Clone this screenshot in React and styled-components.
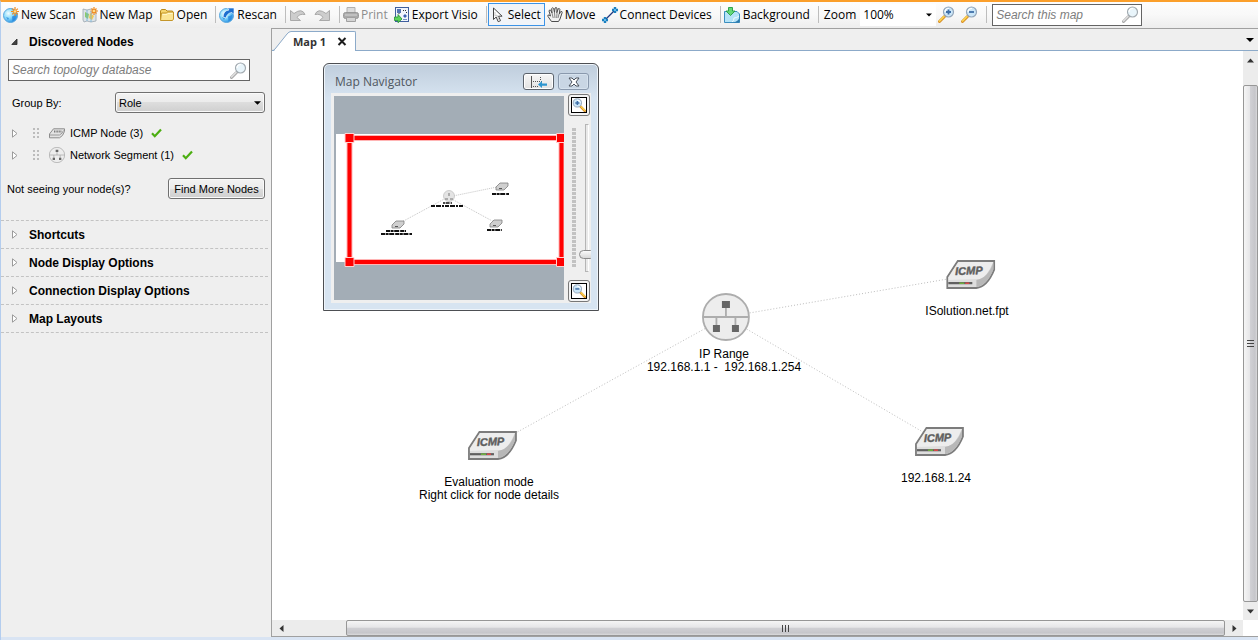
import React from 'react';
import styled, { createGlobalStyle, css } from 'styled-components';

const GlobalStyle = createGlobalStyle`
    *, *::before, *::after { box-sizing: border-box; }

    body {
        margin: 0;
        background: #efefef;
        color: #000;
        font-family: "Liberation Sans", Arial, sans-serif;
        font-size: 11px;
    }

    button, input, select { font: inherit; color: inherit; }
    svg { display: block; flex: none; }
`;

const segoe = css`
    font-family: "Open Sans", "Noto Sans", sans-serif;
    font-size: 12px;
`;

const Page = styled.div`
    min-height: 100vh;
    display: flex;
    flex-direction: column;
    border-top: 2px solid #fb9f2b;
    border-left: 1px solid #b4cdee;
`;

/* ---------- toolbar ---------- */

const Toolbar = styled.header`
    ${segoe}
    height: 26px;
    padding-bottom: 1px;
    display: flex;
    align-items: center;
    white-space: nowrap;
    background: linear-gradient(#fdfdfd, #f8f8f8 50%, #ededed);
`;

const ToolButton = styled.button`
    height: 23px;
    padding: 0 3px 0 1px;
    display: flex;
    align-items: center;
    gap: 2px;
    border: 1px solid ${p => (p.$active ? '#3c93e6' : 'transparent')};
    background: ${p => (p.$active ? '#f1f4f8' : 'none')};

    &:disabled { color: #8d8d8d; }
`;

const Separator = styled.span`
    width: 1px;
    height: 17px;
    margin: 0 1px 0 4px;
    background: #bdbdbd;
`;

const ZoomLabel = styled.label`
    padding: 0 4px;
`;

const SelectWrap = styled.div`
    position: relative;
    width: ${p => p.$width};

    svg {
        position: absolute;
        right: 4px;
        top: 50%;
        margin-top: -2px;
        pointer-events: none;
    }
`;

const ZoomSelect = styled.select`
    appearance: none;
    width: 100%;
    height: 22px;
    padding: 0 3px;
    border: none;
    background: #fff;
`;

const SearchBox = styled.div`
    height: 22px;
    width: ${p => p.$width};
    margin: ${p => p.$margin};
    padding: 0 2px 0 3px;
    display: flex;
    align-items: center;
    border: 1px solid #646464;
    background: #fff;

    input {
        flex: 1;
        min-width: 0;
        padding: 0;
        border: none;
        outline: none;
        background: none;
        font-family: "Liberation Sans", Arial, sans-serif;
        font-size: 12px;
        font-style: italic;
    }

    input::placeholder { color: #7d7d7d; opacity: 1; }
`;

/* ---------- sidebar ---------- */

const Body = styled.div`
    flex: 1;
    display: flex;
    border-bottom: 3px solid #d9e4f3;
`;

const Sidebar = styled.aside`
    flex: none;
    width: 270px;
    padding-right: 3px;
`;

const SectionTitle = styled.button`
    width: 100%;
    height: 27px;
    padding: 0 0 0 10px;
    display: flex;
    align-items: center;
    gap: 10px;
    border: none;
    background: none;
    font-size: 12px;
    font-weight: bold;
    text-align: left;
`;

const Section = styled.section`
    border-top: 1px dashed #c3c3c3;

    &:last-child { border-bottom: 1px dashed #c3c3c3; }
`;

const FieldRow = styled.div`
    padding: ${p => p.$padding};
    display: flex;
    align-items: center;
    justify-content: space-between;
`;

const raised = css`
    height: 21px;
    border: 1px solid #707070;
    border-radius: 3px;
    background: linear-gradient(#f3f3f3, #ebebeb 50%, #dddddd 50%, #cfcfcf);
    box-shadow: inset 0 0 0 1px #fafafa;
`;

const RoleSelect = styled.select`
    ${raised}
    appearance: none;
    width: 100%;
    padding: 0 3px;
`;

const FindButton = styled.button`
    ${raised}
    width: 97px;
    padding: 0;
`;

const Tree = styled.ul`
    margin: 0;
    padding: 9px 0 0 10px;
    list-style: none;
`;

const TreeItem = styled.li`
    height: 22px;
    display: flex;
    align-items: center;

    .grip { margin: 0 9px 0 13px; }
    .kind { margin-right: 5px; }
    .check { margin-left: 8px; }
`;

/* ---------- map area ---------- */

const Workspace = styled.main`
    flex: 1;
    min-width: 0;
    display: flex;
    flex-direction: column;
    border: 1px solid #a0a0a0;
    border-right: none;
`;

const TabStrip = styled.div`
    height: 22px;
    display: flex;
    align-items: flex-end;
    justify-content: space-between;
    border-bottom: 1px solid #8caac9;
`;

const Tab = styled.div`
    ${segoe}
    font-size: 11px;
    font-weight: bold;
    height: 20px;
    margin-bottom: -1px;
    display: flex;
    color: #333;
`;

const TabBody = styled.div`
    width: 65px;
    padding: 0 8px 0 2px;
    display: flex;
    align-items: center;
    justify-content: space-between;
    border: 1px solid #8caac9;
    border-width: 1px 1px 0 0;
    border-radius: 0 2px 0 0;
    background: #fff;
`;

const PlainButton = styled.button`
    padding: 0;
    border: none;
    background: none;
`;

const TabMenu = styled(PlainButton)`
    padding: 8px 4px;
`;

const MapGrid = styled.div`
    flex: 1;
    display: grid;
    grid-template: minmax(0, 1fr) 16px / minmax(0, 1fr) 15px;
    background: #fff;
`;

const Canvas = styled.div`
    position: relative;
    min-height: 480px;
    overflow: hidden;
    background: #fff;
`;

const Links = styled.svg`
    position: absolute;
    inset: 0;
    width: 100%;
    height: 100%;
`;

const Node = styled.div`
    position: absolute;
    left: ${p => p.$x}px;
    top: ${p => p.$y}px;
    transform: translateX(-50%);
    display: flex;
    flex-direction: column;
    align-items: center;
    gap: ${p => p.$gap}px;
    font-size: 12px;
    line-height: 13px;
    text-align: center;
    white-space: pre;
`;

const Scroll = styled.div`
    display: flex;
    flex-direction: ${p => (p.$vertical ? 'column' : 'row')};
    background: #ececec;

    button {
        flex: 0 0 18px;
        display: flex;
        align-items: center;
        justify-content: center;
    }
`;

const Thumb = styled.div`
    flex: 1;
    margin: ${p => (p.$vertical ? '16px 0 0' : '0 0 0 56px')};
    display: flex;
    align-items: center;
    justify-content: center;
    border: 1px solid #979797;
    border-radius: 2px;
    background: linear-gradient(${p => (p.$vertical ? '90deg' : '180deg')}, #f5f5f5, #e6e6e8 45%, #d0d0d4 50%, #c6c6ca 85%, #dadadc);
`;

/* ---------- navigator window ---------- */

const Navigator = styled.section`
    position: absolute;
    left: 51px;
    top: 12px;
    width: 276px;
    padding: 0 7px 7px;
    border: 1px solid #4d4f53;
    border-radius: 6px 6px 0 0;
    box-shadow: inset 0 0 0 1px #eef4fa;
    background: linear-gradient(#bfcddc, #d7e4f1 34px);
`;

const NavTitle = styled.div`
    ${segoe}
    height: 29px;
    padding: 6px 2px 0 4px;
    display: flex;
    align-items: center;
    gap: 4px;
    color: #4f5760;

    span { flex: 1; }
`;

const TitleButton = styled.button`
    width: 31px;
    height: 17px;
    padding: 0;
    display: flex;
    align-items: center;
    justify-content: center;
    border: 1px solid ${p => (p.$light ? '#5b626b' : '#8a99ad')};
    border-radius: 3px;
    background: ${p => (p.$light ? 'linear-gradient(#f7f7f7, #e2e2e2)' : '#c9d6e4')};
    box-shadow: inset 0 0 0 1px ${p => (p.$light ? '#fff' : '#d6e2ee')};
`;

const NavBody = styled.div`
    height: 210px;
    padding-left: 3px;
    display: flex;
    gap: 4px;
    background: #efefef;
`;

const Overview = styled.svg`
    width: 230px;
    height: 204px;
    margin-top: 3px;
    background: #a3adb6;
`;

const NavTools = styled.div`
    flex: 1;
    min-width: 0;
    display: flex;
    flex-direction: column;
    padding: 1px 0;
    overflow: hidden;
`;

const ZoomButton = styled.button`
    flex: none;
    width: 22px;
    height: 22px;
    padding: 0;
    display: flex;
    align-items: center;
    justify-content: center;
    border: 1px solid #777;
    border-radius: 3px;
    background: #f3f3f3;
`;

const LensFrame = styled.span`
    width: 16px;
    height: 16px;
    border: 1px solid #000;
    background: #fff;
`;

const SliderRow = styled.div`
    flex: 1;
    min-height: 0;
    margin: 8px 0;
    padding-left: 4px;
    display: flex;
    gap: 3px;

    &::before {
        content: "";
        flex: none;
        width: 4px;
        margin: 4px 0;
        background: repeating-linear-gradient(#c2c2c2 0 3px, #efefef 3px 4px);
    }
`;

const ZoomSlider = styled.input`
    appearance: none;
    writing-mode: vertical-lr;
    direction: rtl;
    flex: none;
    width: 16px;
    height: auto;
    min-height: 0;
    margin: 0;
    background: none;

    &::-webkit-slider-runnable-track {
        width: 4px;
        border: 1px solid #b5b5b5;
        border-right-color: #fff;
        background: #e9e9e9;
    }

    &::-webkit-slider-thumb {
        appearance: none;
        width: 16px;
        height: 9px;
        margin-left: -7px;
        border: 1px solid #8a8a8a;
        border-radius: 5px;
        background: linear-gradient(#fafafa, #d8d8d8);
    }
`;

/* ---------- icons ---------- */

const Globe = ({ spark, arrow }) => (
    <svg width="16" height="16" viewBox="0 0 16 16">
        <defs>
            <radialGradient id="globe" cx=".35" cy=".35" r=".75">
                <stop offset="0" stopColor="#f2fdff" />
                <stop offset=".45" stopColor="#8bdcfb" />
                <stop offset="1" stopColor="#1a86e0" />
            </radialGradient>
        </defs>
        <circle cx="7.500" cy="8.500" r="7" fill="url(#globe)" stroke="#5aa7de" />
        <path d="M9 9.500l4-1.500-.5 4-3 2.500zM3 10l3 1-1 2z" fill="#1f7fdc" opacity=".7" />
        {spark && <path d="M12 0v9M8 4.500h8M9.200 1.700l5.600 5.600M14.800 1.700l-5.600 5.600" stroke="#f28a1c" strokeWidth="1.200" />}
        {spark && <circle cx="12" cy="4.500" r="1.300" fill="#ffe08a" />}
        {arrow && <path d="M4 10q.5-6.500 6-7L8.500 1H15v6.500L13 5.500Q8 6 7 11z" fill="#1d6fd0" stroke="#fff" strokeWidth=".6" />}
    </svg>
);

const NewMapIcon = () => (
    <svg width="16" height="16" viewBox="0 0 16 16">
        <path d="M1 2l4 1 4-1 5 1v11l-5 1-4-1-3 1-1-2z" fill="#dde4e8" stroke="#9aa6ae" strokeWidth=".8" />
        <path d="M3 5l4 2-1 5-3-2z" fill="#8ccb6a" />
        <path d="M8 6l4 3-2 4-3-2z" fill="#f5c94d" />
        <path d="M5 3v11M9 4v11" stroke="#6fb2dc" strokeWidth=".8" />
        <path d="M12 0v8M8.500 4h7.500M9.500 1.500l5 5M14.500 1.500l-5 5" stroke="#f28a1c" strokeWidth="1.200" />
        <circle cx="12" cy="4" r="1.200" fill="#ffe08a" />
    </svg>
);

const FolderIcon = () => (
    <svg width="16" height="16" viewBox="0 0 16 16">
        <path d="M1.500 12.500V4l1-1.500h4L8 4h5.500v2" fill="#f5d66f" stroke="#b88a1d" />
        <path d="M1.500 13.500l1-7.500h5l1-1h6v7l-1 1.500z" fill="#fbe594" stroke="#c4962a" />
        <path d="M3.500 7.500h4.500l1-1h4.500" stroke="#fff6c9" fill="none" />
    </svg>
);

const UndoIcon = ({ flip }) => (
    <svg width="18" height="14" viewBox="0 0 18 14">
        <g transform={flip ? 'translate(18 0) scale(-1 1)' : undefined}>
            <path d="M1.500 2.500v10h10L8 9.500Q10 5.500 16 6.500 13-.5 5 5.500z" fill="#cdcdcd" stroke="#a9a9a9" />
        </g>
    </svg>
);

const PrinterIcon = () => (
    <svg width="16" height="16" viewBox="0 0 16 16">
        <path d="M4 .5h8V6H4z" fill="#dcdcdc" stroke="#b0b0b0" />
        <rect x=".5" y="5.500" width="15" height="6" rx="2" fill="#aaa" stroke="#989898" />
        <path d="M2 8h12" stroke="#d6d6d6" />
        <path d="M3.500 10.500h9v4h-9z" fill="#d4d4d4" stroke="#a0a0a0" />
    </svg>
);

const VisioIcon = () => (
    <svg width="16" height="16" viewBox="0 0 16 16">
        <rect x="1.500" y=".5" width="13" height="14" fill="#f1f5fc" stroke="#3f5f9e" />
        <path d="M3 2h4v4H3z" fill="#5474b4" />
        <path d="M9 3.500h3M12.500 5v2M5 6v2" stroke="#333" strokeDasharray="1 1" />
        <path d="M11 7l2 2-2 2-2-2z" fill="#3f62b2" />
        <path d="M9 12.500h4" stroke="#7790bf" />
        <path d="M.5 10H4V7.500L8 12l-4 3.800V13.500H.5z" fill="#5ed45c" stroke="#258f35" strokeWidth=".8" />
    </svg>
);

const PointerIcon = () => (
    <svg width="16" height="16" viewBox="0 0 16 16">
        <path d="M3.500 1v11.500l2.700-2.500 2 4.700 2.300-1-2-4.500h3.600z" fill="#fff" stroke="#454545" />
        <path d="M5 5v4l2-1 2 5" stroke="#c9c9c9" fill="none" />
    </svg>
);

const HandIcon = () => (
    <svg width="16" height="16" viewBox="0 0 16 16">
        <path d="M4.500 14.500L1 9.500q-.8-1.800 1-1.500l1.500 1L2 4q.3-1.700 1.800-.7L5 6l-.3-4.500q1-1.500 2 0L7.500 5.500 8 1q1-1 2 .2l-.2 4.600 1.400-4q1.300-.9 1.700.6L12.300 7l1.500-2.500q1.500-.4 1.400 1L13 12l-1.500 2.500z" fill="#f1f1f1" stroke="#4d4d4d" />
        <path d="M5 6l1.200 5M7.500 6l.5 5M10 6l-.3 5M12 7l-1 4" stroke="#858585" fill="none" />
    </svg>
);

const ConnectIcon = () => (
    <svg width="16" height="16" viewBox="0 0 16 16">
        <path d="M3 13L13 3" stroke="#20397f" strokeWidth="1.200" />
        <path d="M13 0v6M10 3h6M3 10v6M0 13h6" stroke="#1a7fc0" strokeWidth="2.400" />
        <path d="M13 2v2M3 12v2" stroke="#68bdea" strokeWidth="2" />
    </svg>
);

const BackgroundIcon = () => (
    <svg width="17" height="16" viewBox="0 0 17 16">
        <path d="M.5 4.500h12.500L15.500 7v8.500H.5z" fill="#b5e3f7" stroke="#3b8ebf" />
        <path d="M9 15.500q6-1 6.500-6v6z" fill="#2b79ac" />
        <path d="M8 15q2-1 2-4 3 0 5-2" fill="none" stroke="#f0fbff" />
        <path d="M4.500.5h4V4H11l-4.500 4.500L2 4h2.500z" fill="#65d878" stroke="#239c44" strokeWidth=".9" />
    </svg>
);

const Lens = ({ sign, grey, flip, size = 17 }) => (
    <svg width={size} height={size} viewBox="0 0 17 17">
        <g transform={flip ? 'translate(17 0) scale(-1 1)' : undefined}>
            <path d="M6.500 10.500L1.500 15.500" stroke={grey ? '#a8a8a8' : '#d9902a'} strokeWidth="3" strokeLinecap="round" />
            <path d="M6 10.500L1.500 15" stroke={grey ? '#e0e0e0' : '#fcd650'} strokeWidth="1.600" strokeLinecap="round" />
            <circle cx="10.500" cy="6" r="5" fill={grey ? '#e9f5fb' : '#cbe6f8'} stroke={grey ? '#a3abb1' : '#93a6ba'} strokeWidth="1.200" />
            <path d="M7 6q0-3.500 4-3.500" stroke="#fff" strokeWidth="1.200" fill="none" />
            {sign && <path d={sign === '+' ? 'M8 6h5M10.500 3.500v5' : 'M8 6h5'} stroke="#3f6fa8" strokeWidth="1.800" />}
        </g>
    </svg>
);

const LensBox = ({ sign }) => (
    <LensFrame><Lens sign={sign} flip size={14} /></LensFrame>
);

const DownArrow = ({ size = 7 }) => (
    <svg width={size} height="4" viewBox="0 0 8 4"><path d="M0 0h8L4 4z" fill="#000" /></svg>
);

const Arrow = ({ turn }) => (
    <svg width="7" height="7" viewBox="0 0 7 7">
        <path d="M0 5.500L3.500 1.500 7 5.500z" fill="#333" transform={`rotate(${turn} 3.500 3.500)`} />
    </svg>
);

const Collapsed = () => (
    <svg width="8" height="9" viewBox="0 0 8 9">
        <path d="M1.500.8v7.400L6 4.500z" fill="#fff" stroke="#9b9b9b" />
    </svg>
);

const Expanded = () => (
    <svg width="8" height="8" viewBox="0 0 8 8">
        <path d="M6 1v5.500H.8z" fill="#444" stroke="#262626" strokeWidth=".8" />
    </svg>
);

const Grip = () => (
    <svg className="grip" width="8" height="11" viewBox="0 0 8 11">
        <path d="M1 1h2M5 1h2M1 5h2M5 5h2M1 9h2M5 9h2" stroke="#bcbcbc" strokeWidth="2" />
    </svg>
);

const Check = () => (
    <svg className="check" width="11" height="10" viewBox="0 0 11 10">
        <path d="M1 5.200l2.800 3L10 1.500" fill="none" stroke="#4cae11" strokeWidth="2.200" />
    </svg>
);

const Cross = () => (
    <svg width="10" height="9" viewBox="0 0 10 9">
        <path d="M1.500 1l7 7M8.500 1l-7 7" stroke="#1c1c1c" strokeWidth="2" />
    </svg>
);

const IcmpIcon = () => (
    <svg width="56" height="29" viewBox="-7 0 56 29">
        <path d="M11.500 1H48v8.500Q41 27 30 28H1V17z" fill="#c9c9c9" stroke="#7c7c7c" strokeWidth="1.800" />
        <path d="M12 2h35Q41 17 33 19.500L2 20v-2.500z" fill="#ededed" />
        <path d="M47 3v6.500Q41 25 30 27v-7Q42 18 47 3z" fill="#b8b8b8" />
        <path d="M2 20h28v7H2z" fill="#dedede" />
        <path d="M2 23.200h24" stroke="#606060" strokeWidth="2.200" />
        <path d="M13 23.200h5" stroke="#6fae3f" strokeWidth="1.600" />
        <path d="M19 23.200h4" stroke="#d94a4a" strokeWidth="1.600" />
        <text x="9" y="15" fontFamily="Liberation Sans" fontSize="11" fontWeight="bold" fontStyle="italic" fill="#5e5e5e" stroke="#5e5e5e" strokeWidth=".4" transform="rotate(-2 9 15)">ICMP</text>
    </svg>
);

const SmallIcmpIcon = () => (
    <svg className="kind" width="16" height="11" viewBox="0 0 16 11">
        <path d="M4.500.8h11v2.500q-1.500 5-5 6.500h-10V6z" fill="#e3e3e3" stroke="#8c8c8c" />
        <path d="M5 3.500h8" stroke="#7a7a7a" strokeWidth="1.800" strokeDasharray="1 .6" />
        <path d="M1 7h9.500q3-1.500 4-4.500" stroke="#9a9a9a" fill="none" />
    </svg>
);

const RangeShape = ({ line }) => (
    <g>
        <circle cx="24" cy="24" r="23" fill="#ededed" stroke="#adadad" strokeWidth={line} />
        <path d="M1 24h46M24 12v12M14.500 24v10M33.500 24v10" stroke="#adadad" strokeWidth={line} />
        <path d="M20 8h8v7h-8zM11 32h7v7h-7zM30 32h7v7h-7z" fill="#666" />
    </g>
);

const RangeIcon = () => (
    <svg width="52" height="48" viewBox="-4 0 52 48"><RangeShape line={1.8} /></svg>
);

const SmallRangeIcon = () => (
    <svg className="kind" width="16" height="16" viewBox="0 0 48 48"><RangeShape line={2.4} /></svg>
);

const DockIcon = () => (
    <svg width="18" height="12" viewBox="0 0 18 12">
        <path d="M1.500 0v12" stroke="#555" />
        <path d="M3 5.500h9M3 10.500h5M10.500 1v4" stroke="#555" strokeDasharray="1 1" />
        <path d="M8 8.500L12 5v2.500h5v2.300h-5V12z" fill="#2f96cf" />
    </svg>
);

const CloseIcon = () => (
    <svg width="12" height="10" viewBox="0 0 12 10">
        <path d="M1 1h3l2 2 2-2h3L8 5l3 4H8L6 7 4 9H1l3-4z" fill="#fff" stroke="#4a525d" />
    </svg>
);

/* ---------- data ---------- */

const nodes = [
    { x: 695, y: 209, cx: 699, cy: 224, label: 'ISolution.net.fpt' },
    { x: 664, y: 376, cx: 668, cy: 391, label: '192.168.1.24' },
    { x: 217, y: 380, cx: 220, cy: 395, label: 'Evaluation mode\nRight click for node details' },
];

const hub = { x: 452, y: 242, cx: 454, cy: 266, label: 'IP Range\n192.168.1.1 -  192.168.1.254' };

const miniNodes = [
    { x: 162, y: 86, rows: [[158, 98, 17]] },
    { x: 156, y: 123, rows: [[153, 134, 15]] },
    { x: 58, y: 124, rows: [[52, 135, 20], [47, 138, 31]] },
];

const sections = ['Shortcuts', 'Node Display Options', 'Connection Display Options', 'Map Layouts'];

const OverviewMap = () => (
    <Overview viewBox="0 0 230 204" aria-label="Map overview">
        <path d="M2 38h228v128H2z" fill="#fff" />
        {miniNodes.map(n => (
            <g key={n.x}>
                <path d={`M114 101L${n.x + 6} ${n.y + 4}`} stroke="#c4c4c4" strokeDasharray="1 1" />
                <path d={`M${n.x + 4} ${n.y + 1}h8v3l-4 4h-8v-3z`} fill="#cfcfcf" stroke="#7d7d7d" strokeWidth=".8" />
                <path d={`M${n.x + 3} ${n.y + 6.5}h3`} stroke="#585858" />
                {n.rows.map(([x, y, w]) => (
                    <path key={y} d={`M${x} ${y}h${w}`} stroke="#111" strokeWidth="2" strokeDasharray="4 .6 3 .6 5 1" />
                ))}
            </g>
        ))}
        <circle cx="115" cy="100" r="5.500" fill="#e4e4e4" stroke="#bdbdbd" strokeWidth=".7" />
        <path d="M115 97v3M111 103h3M116 103h3" stroke="#777" />
        <path d="M109 107h9" stroke="#111" strokeDasharray="2 .6 4 1" strokeWidth="1.500" />
        <path d="M97 110h33" stroke="#111" strokeDasharray="4 1 5 1 2 1" strokeWidth="2" />
        <path d="M15.500 42h212v124h-212z" fill="none" stroke="#ffb5b5" strokeWidth="6" />
        <path d="M15.500 42h212v124h-212z" fill="none" stroke="#f00" strokeWidth="4" />
        <path d="M11 37.500h9v9h-9zM222.500 37.500h9v9h-9zM11 161.500h9v9h-9zM222.500 161.500h9v9h-9z" fill="#f00" stroke="#ffd0d0" />
    </Overview>
);

const MapNavigator = () => (
    <Navigator aria-label="Map Navigator">
        <NavTitle>
            <span>Map Navigator</span>
            <TitleButton $light aria-label="Dock"><DockIcon /></TitleButton>
            <TitleButton aria-label="Close"><CloseIcon /></TitleButton>
        </NavTitle>
        <NavBody>
            <OverviewMap />
            <NavTools>
                <ZoomButton aria-label="Zoom in"><LensBox sign="+" /></ZoomButton>
                <SliderRow>
                    <ZoomSlider type="range" min="0" max="100" defaultValue="9" aria-label="Zoom level" />
                </SliderRow>
                <ZoomButton aria-label="Zoom out"><LensBox sign="-" /></ZoomButton>
            </NavTools>
        </NavBody>
    </Navigator>
);

const App = () => {
    return (
        <Page>
            <GlobalStyle />
            <Toolbar>
                <ToolButton><Globe spark />New Scan</ToolButton>
                <ToolButton><NewMapIcon />New Map</ToolButton>
                <ToolButton><FolderIcon />Open</ToolButton>
                <Separator />
                <ToolButton><Globe arrow />Rescan</ToolButton>
                <Separator />
                <ToolButton disabled aria-label="Undo"><UndoIcon /></ToolButton>
                <ToolButton disabled aria-label="Redo"><UndoIcon flip /></ToolButton>
                <Separator />
                <ToolButton disabled><PrinterIcon />Print</ToolButton>
                <ToolButton><VisioIcon />Export Visio</ToolButton>
                <Separator />
                <ToolButton $active><PointerIcon />Select</ToolButton>
                <ToolButton><HandIcon />Move</ToolButton>
                <ToolButton><ConnectIcon />Connect Devices</ToolButton>
                <Separator />
                <ToolButton><BackgroundIcon />Background</ToolButton>
                <Separator />
                <ZoomLabel htmlFor="zoom">Zoom</ZoomLabel>
                <SelectWrap $width="76px">
                    <ZoomSelect id="zoom"><option>100%</option></ZoomSelect>
                    <DownArrow size={6} />
                </SelectWrap>
                <ToolButton aria-label="Zoom in"><Lens sign="+" /></ToolButton>
                <ToolButton aria-label="Zoom out"><Lens sign="-" /></ToolButton>
                <Separator />
                <SearchBox $width="150px" $margin="0 0 0 4px">
                    <input type="text" placeholder="Search this map" aria-label="Search this map" />
                    <Lens grey />
                </SearchBox>
            </Toolbar>
            <Body>
                <Sidebar>
                    <SectionTitle><Expanded />Discovered Nodes</SectionTitle>
                    <SearchBox $width="242px" $margin="4px 0 0 7px">
                        <input type="text" placeholder="Search topology database" aria-label="Search topology database" />
                        <Lens grey />
                    </SearchBox>
                    <FieldRow $padding="11px 3px 0 11px">
                        <label htmlFor="group">Group By:</label>
                        <SelectWrap $width="150px">
                            <RoleSelect id="group"><option>Role</option></RoleSelect>
                            <DownArrow />
                        </SelectWrap>
                    </FieldRow>
                    <Tree>
                        <TreeItem>
                            <Collapsed /><Grip /><SmallIcmpIcon />ICMP Node (3)<Check />
                        </TreeItem>
                        <TreeItem>
                            <Collapsed /><Grip /><SmallRangeIcon />Network Segment (1)<Check />
                        </TreeItem>
                    </Tree>
                    <FieldRow $padding="12px 3px 21px 6px">
                        <span>Not seeing your node(s)?</span>
                        <FindButton>Find More Nodes</FindButton>
                    </FieldRow>
                    {
                        sections.map(title => (
                            <Section key={title}>
                                <SectionTitle><Collapsed />{title}</SectionTitle>
                            </Section>
                        ))
                    }
                </Sidebar>
                <Workspace>
                    <TabStrip>
                        <Tab>
                            <svg width="19" height="20" viewBox="0 0 19 20">
                                <path d="M0 20h2L15 3q2-2.500 4-2.500V20z" fill="#fff" />
                                <path d="M0 19.500q2 0 3-1.500L15 3q2-2.500 4-2.500" fill="none" stroke="#8caac9" />
                            </svg>
                            <TabBody>
                                Map 1
                                <PlainButton aria-label="Close tab"><Cross /></PlainButton>
                            </TabBody>
                        </Tab>
                        <TabMenu aria-label="Tabs"><DownArrow size={8} /></TabMenu>
                    </TabStrip>
                    <MapGrid>
                        <Canvas>
                            <Links>
                                {nodes.map(n => (
                                    <line key={n.label} x1={hub.cx} y1={hub.cy} x2={n.cx} y2={n.cy} stroke="#bdbdbd" strokeDasharray="1 2" />
                                ))}
                            </Links>
                            <Node $x={hub.x} $y={hub.y} $gap={7}>
                                <RangeIcon />
                                {hub.label}
                            </Node>
                            {nodes.map(n => (
                                <Node key={n.label} $x={n.x} $y={n.y} $gap={16}>
                                    <IcmpIcon />
                                    {n.label}
                                </Node>
                            ))}
                            <MapNavigator />
                        </Canvas>
                        <Scroll $vertical>
                            <PlainButton aria-label="Scroll up"><Arrow turn={0} /></PlainButton>
                            <Thumb $vertical>
                                <svg width="7" height="8" viewBox="0 0 7 8"><path d="M0 .5h7M0 3.500h7M0 6.500h7" stroke="#444" /></svg>
                            </Thumb>
                            <PlainButton aria-label="Scroll down"><Arrow turn={180} /></PlainButton>
                        </Scroll>
                        <Scroll>
                            <PlainButton aria-label="Scroll left"><Arrow turn={-90} /></PlainButton>
                            <Thumb>
                                <svg width="8" height="7" viewBox="0 0 8 7"><path d="M.5 0v7M3.500 0v7M6.500 0v7" stroke="#444" /></svg>
                            </Thumb>
                            <PlainButton aria-label="Scroll right"><Arrow turn={90} /></PlainButton>
                        </Scroll>
                    </MapGrid>
                </Workspace>
            </Body>
        </Page>
    );
}

export default App;
